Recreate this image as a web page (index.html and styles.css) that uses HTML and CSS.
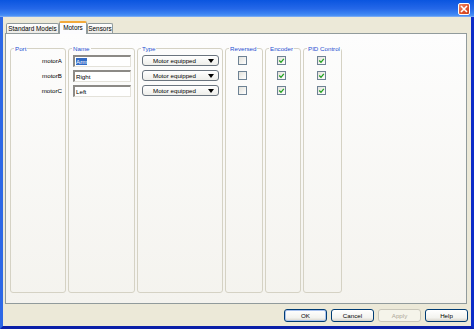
FILE: index.html
```html
<!DOCTYPE html>
<html>
  <head>
    <title>Motors</title>
    <link rel="stylesheet" href="styles.css">
  </head>
  <body>
    <div class="window">
      <div class="titlebar">
        <span class="close">
          <svg width="8" height="8" viewBox="0 0 8 8"><path d="M1 1L7 7M7 1L1 7" stroke="#fff" stroke-width="1.6"/></svg>
        </span>
      </div>
      <div class="client">
        <div class="tabs">
          <div class="tab tab-models">Standard Models</div>
          <div class="tab tab-motors active">Motors</div>
          <div class="tab tab-sensors">Sensors</div>
        </div>
        <div class="panel">
          <fieldset class="group port">
            <legend>Port</legend>
            <div class="row">motorA</div>
            <div class="row">motorB</div>
            <div class="row">motorC</div>
          </fieldset>
          <fieldset class="group name">
            <legend>Name</legend>
            <div class="row"><div class="textbox"><span class="sel">Arm</span></div></div>
            <div class="row"><div class="textbox">Right</div></div>
            <div class="row"><div class="textbox">Left</div></div>
          </fieldset>
          <fieldset class="group type">
            <legend>Type</legend>
            <div class="row"><div class="combo"><span>Motor equipped</span><svg width="6" height="4" viewBox="0 0 6 4"><path d="M0 0H6L3 4Z" fill="#000"/></svg></div></div>
            <div class="row"><div class="combo"><span>Motor equipped</span><svg width="6" height="4" viewBox="0 0 6 4"><path d="M0 0H6L3 4Z" fill="#000"/></svg></div></div>
            <div class="row"><div class="combo"><span>Motor equipped</span><svg width="6" height="4" viewBox="0 0 6 4"><path d="M0 0H6L3 4Z" fill="#000"/></svg></div></div>
          </fieldset>
          <fieldset class="group reversed">
            <legend>Reversed</legend>
            <div class="row"><span class="check"></span></div>
            <div class="row"><span class="check"></span></div>
            <div class="row"><span class="check"></span></div>
          </fieldset>
          <fieldset class="group encoder">
            <legend>Encoder</legend>
            <div class="row"><span class="check on"><svg width="7" height="7" viewBox="0 0 7 7"><path d="M1.2 3.5L3 5.3L5.8 1.8" fill="none" stroke="#21A121" stroke-width="1.3"/></svg></span></div>
            <div class="row"><span class="check on"><svg width="7" height="7" viewBox="0 0 7 7"><path d="M1.2 3.5L3 5.3L5.8 1.8" fill="none" stroke="#21A121" stroke-width="1.3"/></svg></span></div>
            <div class="row"><span class="check on"><svg width="7" height="7" viewBox="0 0 7 7"><path d="M1.2 3.5L3 5.3L5.8 1.8" fill="none" stroke="#21A121" stroke-width="1.3"/></svg></span></div>
          </fieldset>
          <fieldset class="group pid">
            <legend>PID Control</legend>
            <div class="row"><span class="check on"><svg width="7" height="7" viewBox="0 0 7 7"><path d="M1.2 3.5L3 5.3L5.8 1.8" fill="none" stroke="#21A121" stroke-width="1.3"/></svg></span></div>
            <div class="row"><span class="check on"><svg width="7" height="7" viewBox="0 0 7 7"><path d="M1.2 3.5L3 5.3L5.8 1.8" fill="none" stroke="#21A121" stroke-width="1.3"/></svg></span></div>
            <div class="row"><span class="check on"><svg width="7" height="7" viewBox="0 0 7 7"><path d="M1.2 3.5L3 5.3L5.8 1.8" fill="none" stroke="#21A121" stroke-width="1.3"/></svg></span></div>
          </fieldset>
        </div>
        <div class="buttons">
          <div class="btn default">OK</div>
          <div class="btn">Cancel</div>
          <div class="btn disabled">Apply</div>
          <div class="btn">Help</div>
        </div>
      </div>
    </div>
  </body>
</html>
```

FILE: styles.css
```css
body {
  margin: 0;
  font-family: "Liberation Sans", Arial, sans-serif;
  font-size: 6.2px;
  color: #000;
}
.window {
  width: 474px;
  height: 329px;
  display: flex;
  flex-direction: column;
  background: #ECE9D8;
}
.titlebar {
  height: 17px;
  box-sizing: border-box;
  padding: 3px 4px 0 0;
  display: flex;
  justify-content: flex-end;
  align-items: flex-start;
  background: linear-gradient(to bottom, #0A55DF, #2467E8 50%, #3A82F2 80%, #4E93F6 94%, #9DBFF2);
}
.close {
  width: 12px;
  height: 12px;
  box-sizing: border-box;
  border: 1px solid #fff;
  border-radius: 2px;
  background: linear-gradient(135deg, #F08A66, #E0512B 60%, #C8401E);
  display: flex;
  align-items: center;
  justify-content: center;
}
.client {
  flex: 1;
  display: flex;
  flex-direction: column;
  padding-top: 4px;
  border-left: 3px solid #2D68E6;
  border-right: 3px solid #0C2BC8;
  border-bottom: 3px solid #0A1FA8;
}

/* tabs */
.tabs {
  display: flex;
  align-items: flex-end;
  padding-left: 3px;
  height: 12px;
}
.tab {
  height: 10px;
  box-sizing: border-box;
  border: 1px solid #919B9C;
  border-bottom: 0;
  border-radius: 2px 2px 0 0;
  background: linear-gradient(#FFFFFF, #ECEBE6);
  text-align: center;
  line-height: 9px;
  font-size: 6.4px;
  white-space: nowrap;
}
.tab-models { width: 53px; }
.tab-motors { width: 28px; }
.tab-sensors { width: 26px; }
.tab.active {
  height: 13px;
  margin-bottom: -1px;
  position: relative;
  z-index: 1;
  background: #FCFCFE;
  border-top: 2px solid #F3A93A;
  line-height: 10px;
}

/* panel */
.panel {
  height: 271px;
  box-sizing: border-box;
  margin: 0 4px 0 2px;
  border: 1px solid #919B9C;
  background: linear-gradient(#FDFDFD, #F4F3EE);
  display: flex;
  gap: 2px;
  padding: 11px 4px 10px 4px;
}
.group {
  margin: 0;
  padding: 1px 3px 0 3px;
  box-sizing: border-box;
  min-width: 0;
  border: 1px solid #D5D2C4;
  border-radius: 3px;
}
.group legend {
  padding: 0 1px;
  margin-left: 0;
  line-height: 7px;
  color: #1E4FD0;
  white-space: nowrap;
}
.port { width: 56px; }
.name { width: 67px; }
.type { width: 86px; }
.reversed { width: 38px; }
.encoder { width: 36px; }
.pid { width: 39px; }

.row {
  height: 15px;
  display: flex;
  align-items: center;
}
.port .row {
  justify-content: flex-end;
}
.name .row {
  padding-left: 1px;
}
.type .row {
  padding-left: 1px;
}
.reversed .row,
.encoder .row,
.pid .row {
  justify-content: center;
  padding-right: 3px;
}

.textbox {
  width: 58px;
  height: 12px;
  box-sizing: border-box;
  background: #fff;
  border-top: 2px solid #8C8A86;
  border-left: 2px solid #8C8A86;
  border-right: 1px solid #E4E2DA;
  border-bottom: 1px solid #E4E2DA;
  padding-left: 1px;
  line-height: 9px;
}
.sel {
  background: #316AC5;
  color: #fff;
}
.combo {
  width: 77px;
  height: 11px;
  box-sizing: border-box;
  border: 1px solid #6A747F;
  border-radius: 3px;
  background: linear-gradient(#FFFFFF, #EEEEEA);
  display: flex;
  align-items: center;
  justify-content: space-between;
  padding: 0 4px 0 10px;
}
.check {
  width: 9px;
  height: 9px;
  box-sizing: border-box;
  border: 1px solid #6E8294;
  background: linear-gradient(135deg, #E2E1DA, #FFFFFF);
  display: flex;
  align-items: center;
  justify-content: center;
}

/* buttons */
.buttons {
  display: flex;
  justify-content: flex-end;
  gap: 4px;
  margin-top: 5px;
  padding-right: 3px;
}
.btn {
  width: 43px;
  height: 13px;
  box-sizing: border-box;
  border: 1px solid #003C74;
  border-radius: 3px;
  background: linear-gradient(#FFFFFF, #F3F3EF 70%, #D8D4CA);
  display: flex;
  align-items: center;
  justify-content: center;
}
.btn.default {
  box-shadow: inset 0 0 0 1px #A9C2EE;
}
.btn.disabled {
  border-color: #C9C7BA;
  background: #F5F4EA;
  color: #ACA899;
}
```
